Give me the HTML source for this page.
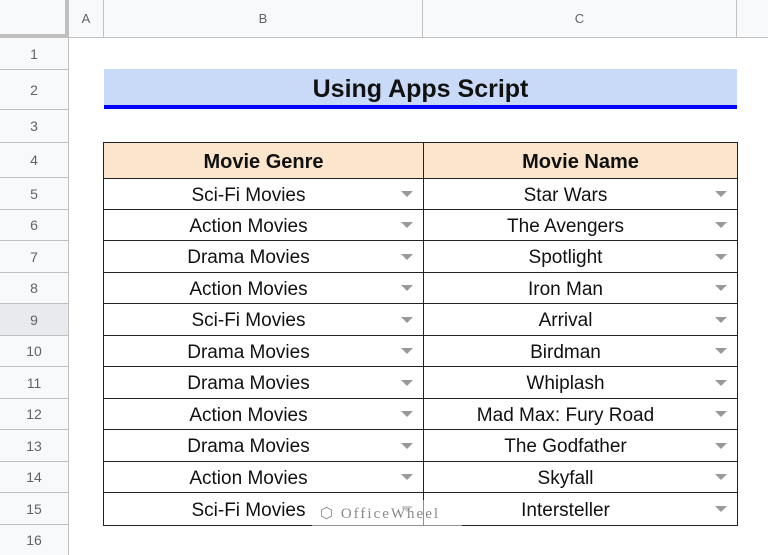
<!DOCTYPE html><html><head><style>
body{margin:0;width:768px;height:555px;overflow:hidden;background:#fff;font-family:"Liberation Sans",Arial,sans-serif;position:relative}
.a{position:absolute;box-sizing:border-box}
.rh{left:0;width:69px;background:#f8f9fa;border-bottom:1px solid #c0c0c0;border-right:1px solid #c0c0c0;color:#5f6368;font-size:14px;display:flex;align-items:center;justify-content:center}
.ch{top:0;height:38px;background:#f8f9fa;border-right:1px solid #c0c0c0;border-bottom:1px solid #c0c0c0;color:#5f6368;font-size:13px;display:flex;align-items:center;justify-content:center}
.c{border-right:1px solid #222;border-bottom:1px solid #222;display:flex;align-items:center;justify-content:center;font-size:19px;color:#111;padding-top:3px}
.dd{position:absolute;right:10px;top:50%;margin-top:-3px;width:0;height:0;border-left:6px solid transparent;border-right:6px solid transparent;border-top:6px solid #999}
</style></head><body>
<div class="a" style="left:0;top:0;width:69px;height:38px;background:#f8f9fa;border-right:4px solid #c0c0c0;border-bottom:4px solid #c0c0c0"></div>
<div class="a ch" style="left:69px;width:35px">A</div>
<div class="a ch" style="left:104px;width:319px">B</div>
<div class="a ch" style="left:423px;width:314px">C</div>
<div class="a ch" style="left:737px;width:31px;border-right:none"></div>
<div class="a rh" style="top:38px;height:32px">1</div>
<div class="a rh" style="top:70px;height:40px">2</div>
<div class="a rh" style="top:110px;height:33px">3</div>
<div class="a rh" style="top:143px;height:35px">4</div>
<div class="a rh" style="top:178px;height:32px">5</div>
<div class="a rh" style="top:210px;height:31px">6</div>
<div class="a rh" style="top:241px;height:32px">7</div>
<div class="a rh" style="top:273px;height:31px">8</div>
<div class="a rh" style="top:304px;height:32px;background:#e8eaed">9</div>
<div class="a rh" style="top:336px;height:31px">10</div>
<div class="a rh" style="top:367px;height:32px">11</div>
<div class="a rh" style="top:399px;height:31px">12</div>
<div class="a rh" style="top:430px;height:32px">13</div>
<div class="a rh" style="top:462px;height:31px">14</div>
<div class="a rh" style="top:493px;height:32px">15</div>
<div class="a rh" style="top:525px;height:30px;border-bottom:none">16</div>
<div class="a" style="left:104px;top:69px;width:633px;height:40px;background:#c9daf8;border-bottom:4px solid #0000ff;display:flex;align-items:center;justify-content:center;font-weight:bold;font-size:25px;color:#111;padding-top:5px">Using Apps Script</div>
<div class="a" style="left:103px;top:142px;width:635px;height:384px;border-left:1px solid #222;border-top:1px solid #222"></div>
<div class="a c" style="left:104px;top:143px;width:320px;height:36px;background:#fce5cd;font-weight:bold;font-size:20px">Movie Genre</div>
<div class="a c" style="left:424px;top:143px;width:314px;height:36px;background:#fce5cd;font-weight:bold;font-size:20px">Movie Name</div>
<div id="rows"></div>
<script>
var d=[["Sci-Fi Movies","Star Wars"],["Action Movies","The Avengers"],["Drama Movies","Spotlight"],["Action Movies","Iron Man"],["Sci-Fi Movies","Arrival"],["Drama Movies","Birdman"],["Drama Movies","Whiplash"],["Action Movies","Mad Max: Fury Road"],["Drama Movies","The Godfather"],["Action Movies","Skyfall"],["Sci-Fi Movies","Intersteller"]];
var ys=[179,210,241,273,304,336,367,399,430,462,493,526],h='';
for(var i=0;i<11;i++){var t=ys[i],hh=ys[i+1]-t;
h+='<div class="a c" style="left:104px;top:'+t+'px;width:320px;height:'+hh+'px;padding-right:30px">'+d[i][0]+'<span class="dd"></span></div>';
h+='<div class="a c" style="left:424px;top:'+t+'px;width:314px;height:'+hh+'px;padding-right:30px">'+d[i][1]+'<span class="dd"></span></div>';}
document.getElementById('rows').innerHTML=h;
</script>
<div class="a" style="left:312px;top:500px;width:150px;height:26px;background:rgba(255,255,255,0.5);color:#888;font-family:'Liberation Serif',serif;font-size:15px;letter-spacing:2px;display:flex;align-items:center;padding-left:8px">⬡ OfficeWheel</div>
</body></html>
